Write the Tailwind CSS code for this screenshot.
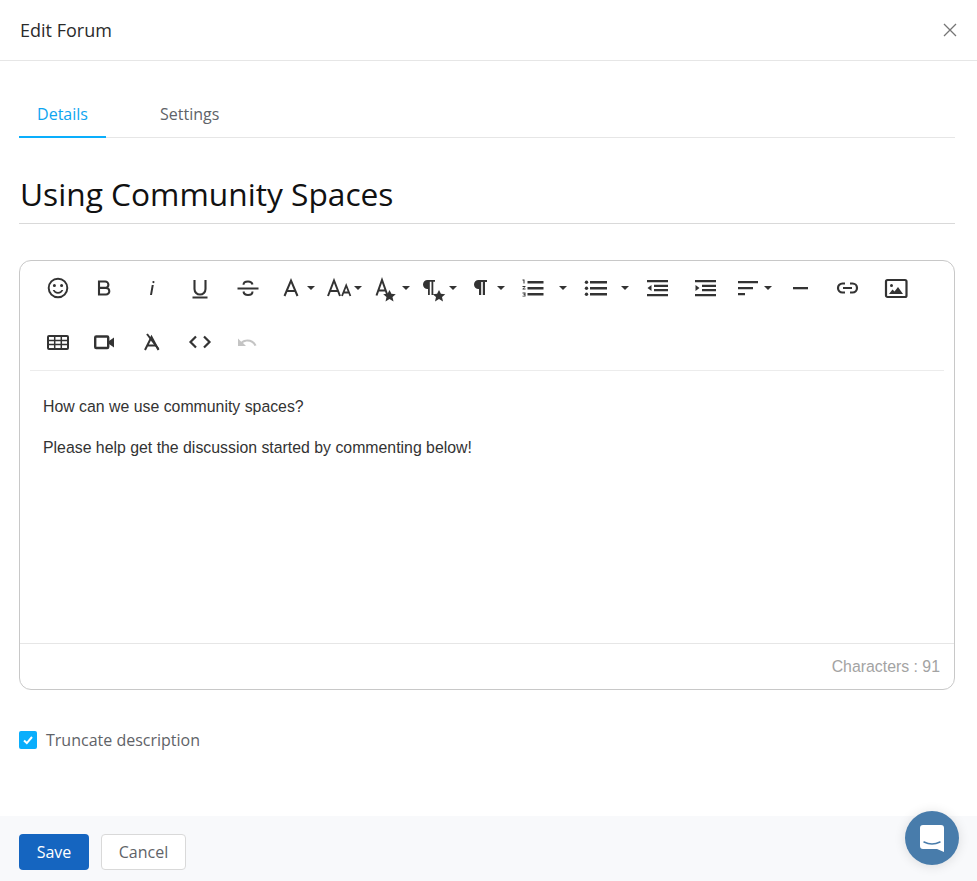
<!DOCTYPE html>
<html lang="en">
<head>
<meta charset="utf-8">
<title>Edit Forum</title>
<script src="https://cdn.jsdelivr.net/npm/@tailwindcss/browser@4"></script>
</head>
<body class="bg-white font-['Open_Sans',sans-serif] w-[977px] h-[881px] overflow-hidden relative">

<header class="h-[61px] border-b border-[#e6e6e6] flex items-center justify-between pl-[20px] pr-[19px]">
  <h1 class="text-[18px] text-[#2b2b2b]">Edit Forum</h1>
  <svg class="w-[16px] h-[16px] text-[#757575]" viewBox="0 0 16 16" fill="none" stroke="currentColor" stroke-width="1.3"><path d="M2 2l12 12M14 2L2 14"/></svg>
</header>

<main class="pl-[19px] pr-[22px] pt-[33px] h-[755px]">
  <nav class="h-[44px] border-b border-[#e6e6e6] flex text-[16px]">
    <a class="w-[87px] h-[44px] text-center leading-[40px] text-[#0ea5f0] border-b-2 border-[#0aaefc]">Details</a>
    <a class="ml-[54px] leading-[40px] text-[#5f6368]">Settings</a>
  </nav>

  <div class="mt-[30px] h-[56px] border-b border-[#d9d9d9] pl-px text-[31.7px] leading-[52px] text-[#111]">Using Community Spaces</div>

  <section class="mt-[36px] h-[430px] border border-[#c8c8c8] rounded-[12px] flex flex-col font-['Liberation_Sans',sans-serif]">
    <div class="mx-[10px] h-[110px] border-b border-[#ececec] pl-[16px] text-[#333]">
      <div class="h-[54px] flex items-center">
        <span class="w-[46px] flex"><svg class="w-6 h-6" viewBox="1.500 1.500 21 21" fill="currentColor"><path d="M11.991,3A9,9,0,1,0,21,12,8.99557,8.99557,0,0,0,11.991,3ZM12,19.300a7.300,7.300,0,1,1,7.300-7.300A7.300,7.300,0,0,1,12,19.300Zm3.105-5.500h1.503a4.94542,4.94542,0,0,1-9.216,0H8.895a3.57808,3.57808,0,0,0,6.21,0ZM7.500,9.750A1.350,1.350,0,1,1,8.850,11.100,1.350,1.350,0,0,1,7.500,9.750Zm6.300,0a1.350,1.350,0,1,1,1.350,1.350A1.350,1.350,0,0,1,13.800,9.750Z"/></svg></span>
        <span class="w-[48px] flex"><svg class="w-6 h-6" viewBox="0 0 24 24" fill="none" stroke="currentColor" stroke-width="2.100"><path d="M7 5.500h6.200a3.200 3.200 0 0 1 0 6.400H7zM7 11.900h7a3.300 3.300 0 0 1 0 6.600H7z"/></svg></span>
        <span class="w-[48px] flex"><svg class="w-6 h-6" viewBox="0 0 24 24" fill="currentColor"><path d="M11.760,9h2L12,19H10Zm1.680-4a1.120,1.120,0,1,0,1.120,1.120A1.120,1.120,0,0,0,13.440,5Z"/></svg></span>
        <span class="w-[48px] flex"><svg class="w-6 h-6" viewBox="0 0 24 24" fill="none" stroke="currentColor" stroke-width="2.100"><path d="M6.500 4v9a5.500 5.500 0 0 0 11 0V4M4.500 21.500h15"/></svg></span>
        <span class="w-[43px] flex"><svg class="w-6 h-6" viewBox="0 0 24 24" fill="none" stroke="currentColor" stroke-width="2"><path d="M1.500 12.500h21M16.500 8.500C16 6.500 14.300 5.500 12 5.500c-2.700 0-4.500 1.300-4.500 3.300M7.500 15.500c.3 2.300 2.200 3.500 4.500 3.500 2.600 0 4.500-1.300 4.500-3.500"/></svg></span>
        <span class="w-[49px] flex items-center"><svg class="w-6 h-6" viewBox="0 0 24 24" fill="none" stroke="currentColor" stroke-width="2"><path d="M5.500 20L12 4.500 18.500 20M7.700 15h8.600"/></svg><i class="ml-[4px] border-x-4 border-t-4 border-x-transparent border-t-[#333]"></i></span>
        <span class="w-[47px] flex items-center"><svg class="w-6 h-6 overflow-visible" viewBox="0 0 24 24" fill="none" stroke="currentColor" stroke-width="2"><path d="M0 20L6 4.500 12 20M2 15h8"/><path stroke-width="1.800" d="M14 20l4.200-10.500L22.400 20M15.500 16.500h5.500"/></svg><i class="ml-[2px] border-x-4 border-t-4 border-x-transparent border-t-[#333]"></i></span>
        <span class="w-[46px] flex items-center"><svg class="w-6 h-6 overflow-visible" viewBox="0 0 24 24" fill="none" stroke="currentColor" stroke-width="2"><path d="M1.500 19.500L7 4l5.500 15.500M3.500 14.500h7"/><path fill="currentColor" stroke="none" d="M14.500 14l1.900 3.700 4.400.5-3.300 2.800 1 4.500-4-2.400-4 2.400 1-4.500-3.300-2.800 4.400-.5z"/></svg><i class="ml-[3px] border-x-4 border-t-4 border-x-transparent border-t-[#333]"></i></span>
        <span class="w-[48px] flex items-center"><svg class="w-6 h-6 overflow-visible" viewBox="0 0 24 24" fill="currentColor"><path d="M14 4H6.500a4.500 4.500 0 0 0 0 9H7v6h1.800V5.800h1.700V19h1.800V5.800H14z"/><path d="M18 14l1.900 3.700 4.400.5-3.300 2.800 1 4.500-4-2.400-4 2.400 1-4.500-3.300-2.800 4.400-.5z"/></svg><i class="ml-[4px] border-x-4 border-t-4 border-x-transparent border-t-[#333]"></i></span>
        <span class="w-[52px] flex items-center"><svg class="w-6 h-6" viewBox="0 0 24 24" fill="currentColor"><path d="M18 4H9.500a4.500 4.500 0 0 0 0 9H10v6h2.200V6h1.600v13H16V6h2z"/></svg><i class="ml-[4px] border-x-4 border-t-4 border-x-transparent border-t-[#333]"></i></span>
        <span class="w-[63px] flex items-center"><svg class="w-6 h-6" viewBox="0 0 24 24" fill="currentColor"><path d="M6.500 5h16v2.400h-16zM6.500 11h16v2.400h-16zM6.500 17h16v2.400h-16z"/><path d="M2.500 3.500h1v4h-1zM1.500 3.500h1.500v1H1.500zM1.500 10h3v.8l-2 1.700h2v1h-3v-.8l2-1.700h-2zM1.500 16.500h3v4h-3v-.8h2v-.8H2.500v-.7h1v-.8h-2z"/></svg><i class="ml-[14px] border-x-4 border-t-4 border-x-transparent border-t-[#333]"></i></span>
        <span class="w-[61px] flex items-center"><svg class="w-6 h-6" viewBox="0 0 24 24" fill="currentColor"><path d="M6 5h17v2.400H6zM6 11h17v2.400H6zM6 17h17v2.400H6z"/><circle cx="2.500" cy="6.200" r="1.700"/><circle cx="2.500" cy="12.200" r="1.700"/><circle cx="2.500" cy="18.200" r="1.700"/></svg><i class="ml-[13px] border-x-4 border-t-4 border-x-transparent border-t-[#333]"></i></span>
        <span class="w-[48px] flex"><svg class="w-6 h-6" viewBox="0 0 24 24" fill="currentColor"><path d="M2 4h21v2.300H2zM9 8.800h14v2.300H9zM9 13h14v2.300H9zM2 18h21v2.300H2zM2.500 12L6.500 9v6z"/></svg></span>
        <span class="w-[43px] flex"><svg class="w-6 h-6" viewBox="0 0 24 24" fill="currentColor"><path d="M2 4h21v2.300H2zM9 8.800h14v2.300H9zM9 13h14v2.300H9zM2 18h21v2.300H2zM6.500 12L2.500 9v6z"/></svg></span>
        <span class="w-[52px] flex items-center"><svg class="w-6 h-6" viewBox="0 0 24 24" fill="currentColor"><path d="M2 5h20v2.300H2zM2 11h15v2.300H2zM2 17h7v2.300H2z"/></svg><i class="ml-[4px] border-x-4 border-t-4 border-x-transparent border-t-[#333]"></i></span>
        <span class="w-[47px] flex"><svg class="w-6 h-6" viewBox="0 0 24 24" fill="currentColor"><path d="M5 11h15v2.300H5z"/></svg></span>
        <span class="w-[49px] flex"><svg class="w-6 h-6" viewBox="0 0 24 24" fill="none" stroke="currentColor" stroke-width="2.200"><path d="M10 7.500H7.500a4.500 4.500 0 0 0 0 9H10M15 7.500h2.500a4.500 4.500 0 0 1 0 9H15M8 12h9"/></svg></span>
        <span class="w-[24px] flex"><svg class="w-6 h-6" viewBox="0 0 24 24" fill="none" stroke="currentColor" stroke-width="2.200"><rect x="2" y="4" width="20.500" height="17" rx="1.500"/><circle cx="7.500" cy="9.500" r="1.500" fill="currentColor" stroke="none"/><path fill="currentColor" stroke="none" d="M5 18l3.500-4.500 2 2 3.500-4.500 5 7z"/></svg></span>
      </div>
      <div class="h-[54px] flex items-center">
        <span class="w-[46px] flex"><svg class="w-6 h-6" viewBox="0 0 24 24" fill="none" stroke="currentColor" stroke-width="2"><rect x="2" y="6" width="20" height="13" rx="1"/><path stroke-width="1.500" d="M2 10.500h20M2 14.500h20M8.700 6v13M15.300 6v13"/></svg></span>
        <span class="w-[48px] flex"><svg class="w-6 h-6" viewBox="0 0 24 24" fill="none" stroke="currentColor" stroke-width="2.400"><rect x="3.200" y="6.500" width="13" height="11.500" rx="1"/><path fill="currentColor" stroke="none" d="M17 11l5-3.500v10L17 14z"/></svg></span>
        <span class="w-[48px] flex"><svg class="w-6 h-6" viewBox="0 0 24 24" fill="none" stroke="currentColor" stroke-width="2"><path d="M5 20l6.500-13L18.500 20M7.500 15.500h8"/><path d="M7 4l11.500 15"/></svg></span>
        <span class="w-[48px] flex"><svg class="w-6 h-6" viewBox="0 0 24 24" fill="none" stroke="currentColor" stroke-width="2.200"><path d="M8 6.500L2.500 12 8 17.500M16 6.500l5.500 5.500-5.500 5.500"/></svg></span>
        <span class="w-[24px] flex"><svg class="w-6 h-6 text-[#c4c4c4]" viewBox="0 0 24 24" fill="currentColor"><path d="M11.500 9.500c-2.500 0-4.600.8-6.300 2.200L2 8.500V16h8l-3-2.900c1.300-1 2.800-1.500 4.500-1.500 3.200 0 5.700 1.800 7 4.400l2-.8C19 12 15.600 9.500 11.500 9.500z"/></svg></span>
      </div>
    </div>

    <div class="flex-1 px-[23px] pt-[25px] text-[15.85px] leading-[22px] text-[#333]">
      <p>How can we use community spaces?</p>
      <p class="mt-[19px]">Please help get the discussion started by commenting below!</p>
    </div>

    <div class="h-[46px] border-t border-[#e6e6e6] flex items-center justify-end pr-[14px] text-[15.85px] text-[#a3a3a3]">Characters : 91</div>
  </section>

  <label class="mt-[38px] flex items-center gap-[9px] text-[16px] text-[#5f6368]">
    <span class="w-[18px] h-[18px] rounded-[2px] bg-[#0aaefc] flex items-center justify-center">
      <svg class="w-3 h-3" viewBox="0 0 12 12" fill="none" stroke="white" stroke-width="2"><path d="M2 6.500l2.800 2.600L10 3"/></svg>
    </span>
    Truncate description
  </label>
</main>

<footer class="h-[65px] bg-[#f8f9fb] flex items-start gap-[12px] pl-[19px] pt-[18px] text-[16px]">
  <button class="w-[70px] h-[36px] rounded-[4px] bg-[#1565c0] text-white">Save</button>
  <button class="w-[85px] h-[36px] rounded-[4px] bg-white border border-[#d9d9d9] text-[#5f6368]">Cancel</button>
</footer>

<div class="absolute left-[905px] top-[811px] w-[54px] h-[54px] rounded-full bg-[#487cab] shadow-[0_1px_12px_rgba(0,0,0,0.12)] flex items-center justify-center">
  <svg class="w-[24px] h-[27px]" viewBox="0 0 24 27" fill="none"><path fill="white" d="M3 0h18a3 3 0 0 1 3 3v24l-7-3H3a3 3 0 0 1-3-3V3a3 3 0 0 1 3-3z"/><path stroke="#487cab" stroke-width="1.500" stroke-linecap="round" d="M4 17c5 2.500 11 2.500 16 0"/></svg>
</div>

</body>
</html>
